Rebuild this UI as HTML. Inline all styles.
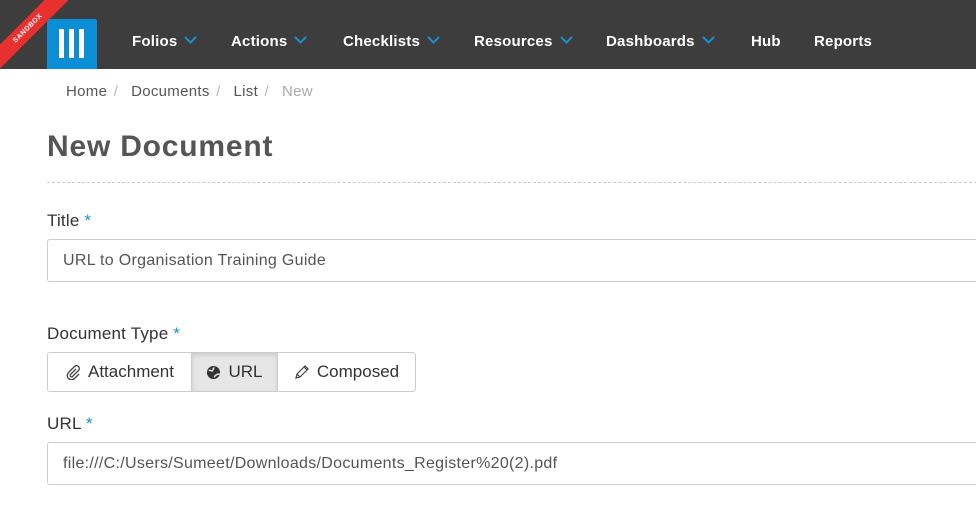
<!DOCTYPE html>
<html><head><style>
*{box-sizing:border-box;margin:0;padding:0}
body{width:976px;height:512px;overflow:hidden;background:#fff;font-family:"Liberation Sans",sans-serif;color:#333;position:relative}
.nav{position:absolute;left:0;top:0;width:976px;height:69px;background:#3d3d3d;overflow:hidden}
.logo{position:absolute;left:47px;top:19px;width:50px;height:50px;background:#0a8fd6;border-radius:2px 2px 0 0}
.logo i{position:absolute;top:10px;width:5px;height:29px;background:#fff}
.ribbon{position:absolute;left:-32px;top:20px;width:120px;height:17px;background:#e8302f;transform:rotate(-45deg);color:#fff;font-size:7px;font-weight:bold;text-align:center;line-height:17px;letter-spacing:.5px}
.ni{position:absolute;top:33px;color:#fff;font-weight:bold;font-size:15px;letter-spacing:.2px}
.ni svg{margin-left:7px;vertical-align:2px}
.a{position:absolute}
.lbl{font-size:17px;color:#333;letter-spacing:.2px}
.lbl b{color:#1a8fd0;font-weight:normal}
.inp{position:absolute;left:47px;width:940px;height:43px;border:1px solid #ccc;border-radius:3px;font-size:16px;color:#555;padding:12px 15px;letter-spacing:.3px}
.bg{position:absolute;left:47px;top:352px;height:40px;display:flex;border:1px solid #ccc;border-radius:3px;font-size:17px;color:#333}
.bg div{padding:9px 0;text-align:center;border-right:1px solid #ccc;display:flex;align-items:center;justify-content:center;gap:7px}
</style></head><body>
<div class="nav">
<div class="logo"><i style="left:12px"></i><i style="left:22px"></i><i style="left:32px"></i></div>
<div class="ribbon">SANDBOX</div>
<div class="ni" style="left:132px">Folios<svg width="13" height="8"><path d="M1 1l5.5 5.5 5.5-5.5" stroke="#1a8fd0" stroke-width="2" fill="none"/></svg></div>
<div class="ni" style="left:231px">Actions<svg width="13" height="8"><path d="M1 1l5.5 5.5 5.5-5.5" stroke="#1a8fd0" stroke-width="2" fill="none"/></svg></div>
<div class="ni" style="left:343px">Checklists<svg width="13" height="8"><path d="M1 1l5.5 5.5 5.5-5.5" stroke="#1a8fd0" stroke-width="2" fill="none"/></svg></div>
<div class="ni" style="left:474px">Resources<svg width="13" height="8"><path d="M1 1l5.5 5.5 5.5-5.5" stroke="#1a8fd0" stroke-width="2" fill="none"/></svg></div>
<div class="ni" style="left:606px">Dashboards<svg width="13" height="8"><path d="M1 1l5.5 5.5 5.5-5.5" stroke="#1a8fd0" stroke-width="2" fill="none"/></svg></div>
<div class="ni" style="left:751px">Hub</div>
<div class="ni" style="left:814px">Reports</div>
</div>
<div class="a" style="left:66px;top:83px;font-size:15px;color:#555;letter-spacing:.3px;word-spacing:2px">Home <span style="color:#bbb">/</span>&nbsp; Documents <span style="color:#bbb">/</span>&nbsp; List <span style="color:#bbb">/</span>&nbsp; <span style="color:#aaa">New</span></div>
<div class="a" style="left:47px;top:130px;font-size:30px;font-weight:bold;color:#555;letter-spacing:.8px">New Document</div>
<div class="a" style="left:47px;top:182px;width:930px;border-top:1px dashed #ccc"></div>
<div class="a lbl" style="left:47px;top:211px">Title <b>*</b></div>
<div class="inp" style="top:239px">URL to Organisation Training Guide</div>
<div class="a lbl" style="left:47px;top:324px">Document Type <b>*</b></div>
<div class="bg">
<div style="width:144px"><svg width="16" height="16" viewBox="0 0 16 16"><path d="M11 5L5.5 10.5a1.4 1.4 0 0 0 2 2L13.5 6.5a2.8 2.8 0 0 0-4-4L3.5 8.5a4.2 4.2 0 0 0 6 6L14 10" stroke="#444" stroke-width="1.3" fill="none"/></svg>Attachment</div>
<div style="width:86px;background:#e6e6e6;box-shadow:inset 0 2px 4px rgba(0,0,0,.12)"><svg width="15" height="15" viewBox="0 0 16 16"><circle cx="8" cy="8" r="7" fill="#333"/><path d="M3 6c2-1 3 1 4 0s0-3 2-3M9 13c0-2 2-2 3-3s2 0 3 0" stroke="#e6e6e6" stroke-width="1.6" fill="none"/></svg>URL</div>
<div style="width:137px;border-right:none"><svg width="16" height="16" viewBox="0 0 16 16"><path d="M2 14l1-4 8-8 3 3-8 8zM3 10l3 3M10 3l3 3" stroke="#444" stroke-width="1.2" fill="none"/></svg>Composed</div>
</div>
<div class="a lbl" style="left:47px;top:414px">URL <b>*</b></div>
<div class="inp" style="top:442px">file:///C:/Users/Sumeet/Downloads/Documents_Register%20(2).pdf</div>
</body></html>
